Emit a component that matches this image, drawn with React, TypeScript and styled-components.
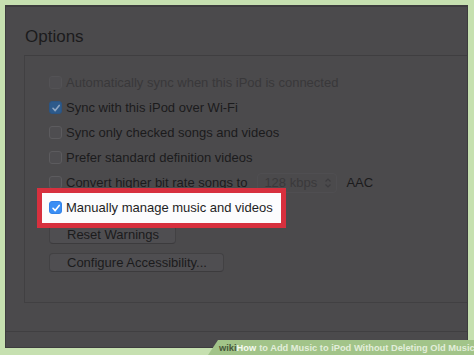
import React from 'react'
import styled, { createGlobalStyle } from 'styled-components'

const GlobalStyle = createGlobalStyle`
  html, body {
    margin: 0;
    padding: 0;
    background: #c6e0b0;
  }
  body {
    font-family: "Liberation Sans", Arial, sans-serif;
  }
`

const Frame = styled.div`
  position: relative;
  width: 474px;
  height: 355px;
  padding: 5px 6px 7px 5px;
  box-sizing: border-box;
  overflow: hidden;
`

const Panel = styled.div`
  height: 100%;
  box-sizing: border-box;
  background: #4b4a4c;
  border: 1px solid #3d3c3e;
  border-top-width: 2px;
  display: flex;
  flex-direction: column;
`

const Heading = styled.div`
  font-size: 17px;
  line-height: 20px;
  color: #1b1b1c;
  padding: 20px 0 0 19px;
  height: 28px;
`

const GroupBox = styled.div`
  margin-left: 18px;
  border: 1px solid #414042;
  border-right: none;
  border-top-color: #3f3e40;
  padding: 14px 0 30px 24px;
  display: flex;
  flex-direction: column;
  align-items: flex-start;
`

const Row = styled.div<{ $highlight?: boolean }>`
  display: flex;
  align-items: center;
  gap: 4px;
  height: 25px;
  box-sizing: content-box;
  ${p => p.$highlight && `
    position: relative;
    z-index: 1;
    background: #fcfcfd;
    outline: 5px solid #d7303e;
    margin: -2px 0 -3px -7px;
    padding: 2px 8px 3px 7px;
  `}
`

const CheckBox = styled.span<{ $checked?: boolean; $disabled?: boolean; $bright?: boolean }>`
  width: 13px;
  height: 13px;
  box-sizing: border-box;
  border-radius: 3px;
  flex: none;
  display: flex;
  align-items: center;
  justify-content: center;
  background: ${p => (p.$bright ? '#3a8ef4' : p.$checked ? '#2d5a8b' : '#4e4d50')};
  border: 1px solid ${p => (p.$bright ? '#3383e8' : p.$checked ? '#2b5482' : p.$disabled ? '#535255' : '#5c5b5e')};
  svg {
    width: 10px;
    height: 10px;
  }
`

const Label = styled.span<{ $disabled?: boolean; $bright?: boolean }>`
  font-size: 13px;
  color: ${p => (p.$bright ? '#1e1e1f' : p.$disabled ? '#39383a' : '#1b1b1c')};
  white-space: nowrap;
`

const Popup = styled.span`
  margin-left: 6px;
  width: 80px;
  height: 20px;
  box-sizing: border-box;
  border: 1px solid #4f4e51;
  border-radius: 4px;
  display: flex;
  align-items: center;
  justify-content: space-between;
  padding: 0 4px 0 6px;
  font-size: 13px;
  color: #3a393b;
  svg {
    width: 8px;
    height: 12px;
  }
`

const Suffix = styled.span`
  margin-left: 5px;
  font-size: 13px;
  color: #1b1b1c;
`

const Button = styled.div<{ $gap: number }>`
  margin-top: ${p => p.$gap}px;
  height: 19px;
  box-sizing: border-box;
  padding: 0 16px 0 17px;
  border: 1px solid #424143;
  border-bottom-color: #3c3b3d;
  border-radius: 4px;
  background: #4f4e51;
  display: flex;
  align-items: center;
  font-size: 13px;
  color: #1b1b1c;
  white-space: nowrap;
`

const Separator = styled.div`
  margin-top: 28px;
  border-top: 1px solid #403f41;
`

const Banner = styled.div`
  position: absolute;
  right: 0;
  bottom: 0;
  width: 266px;
  height: 15px;
  background: #a2c489;
  clip-path: polygon(10px 0, 100% 0, 100% 100%, 0 100%);
  display: flex;
  align-items: center;
  padding-left: 11px;
  box-sizing: border-box;
  font-size: 9.3px;
  font-weight: bold;
  color: #e3eedb;
  white-space: nowrap;
`

const Wiki = styled.span`
  color: #47573a;
`

const How = styled.span`
  color: #f6faf2;
  margin-right: 3px;
`

const Check = ({ color }: { color: string }) => (
  <svg viewBox="0 0 10 10">
    <path d="M2 5.3 L4.2 7.6 L8.2 2.4" fill="none" stroke={color} strokeWidth="1.6" strokeLinecap="round" strokeLinejoin="round" />
  </svg>
)

const Stepper = () => (
  <svg viewBox="0 0 8 12">
    <path d="M1.5 4.5 L4 2 L6.5 4.5 M1.5 7.5 L4 10 L6.5 7.5" fill="none" stroke="#3c3b3e" strokeWidth="1.2" />
  </svg>
)

const App = () => {
  return (
    <Frame>
      <GlobalStyle />
      <Panel>
        <Heading>Options</Heading>
        <GroupBox>
          <Row>
            <CheckBox $disabled />
            <Label $disabled>Automatically sync when this iPod is connected</Label>
          </Row>
          <Row>
            <CheckBox $checked>
              <Check color="#8fa6c2" />
            </CheckBox>
            <Label>Sync with this iPod over Wi-Fi</Label>
          </Row>
          <Row>
            <CheckBox />
            <Label>Sync only checked songs and videos</Label>
          </Row>
          <Row>
            <CheckBox />
            <Label>Prefer standard definition videos</Label>
          </Row>
          <Row>
            <CheckBox />
            <Label>Convert higher bit rate songs to</Label>
            <Popup>
              128 kbps
              <Stepper />
            </Popup>
            <Suffix>AAC</Suffix>
          </Row>
          <Row $highlight>
            <CheckBox $checked $bright>
              <Check color="#ffffff" />
            </CheckBox>
            <Label $bright>Manually manage music and videos</Label>
          </Row>
          <Button $gap={5}>Reset Warnings</Button>
          <Button $gap={9}>Configure Accessibility...</Button>
        </GroupBox>
        <Separator />
      </Panel>
      <Banner>
        <Wiki>wiki</Wiki>
        <How>How</How>
        to Add Music to iPod Without Deleting Old Music
      </Banner>
    </Frame>
  )
}

export default App
